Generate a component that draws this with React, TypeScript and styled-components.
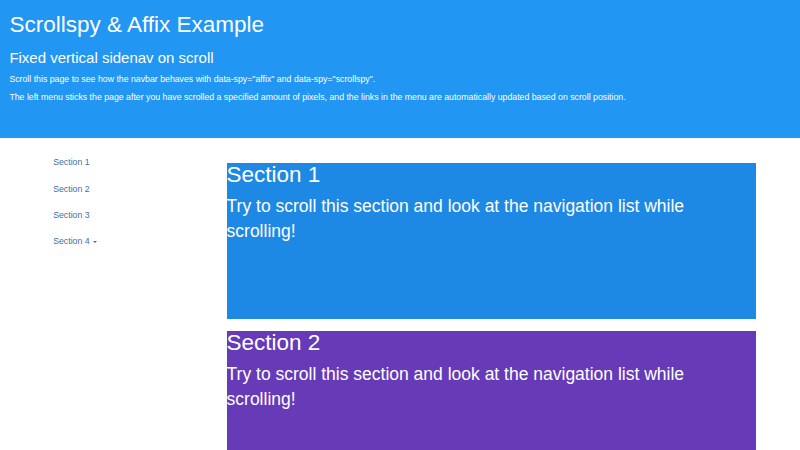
import styled, { createGlobalStyle } from 'styled-components';

const GlobalStyle = createGlobalStyle`
  html, body {
    margin: 0;
    padding: 0;
    overflow: hidden;
    background: #fff;
  }

  body {
    font-family: 'Liberation Sans', Arial, sans-serif;
    font-size: 8.75px;
    line-height: 12.5px;
    color: #333;
  }

  * {
    box-sizing: border-box;
  }
`;

const sections = [
  { id: 'section1', title: 'Section 1', color: '#1E88E5' },
  { id: 'section2', title: 'Section 2', color: '#673ab7' },
];

const navItems = ['Section 1', 'Section 2', 'Section 3'];

function App() {
  return (
    <>
      <GlobalStyle />
      <Header>
        <Title>Scrollspy &amp; Affix Example</Title>
        <SubTitle>Fixed vertical sidenav on scroll</SubTitle>
        <Lead>
          Scroll this page to see how the navbar behaves with data-spy="affix"
          and data-spy="scrollspy".
        </Lead>
        <Lead>
          The left menu sticks the page after you have scrolled a specified
          amount of pixels, and the links in the menu are automatically updated
          based on scroll position.
        </Lead>
      </Header>
      <Spacer />
      <Container>
        <SideNav>
          <NavList>
            {navItems.map((item) => (
              <NavItem key={item}>
                <NavLink href="#">{item}</NavLink>
              </NavItem>
            ))}
            <NavItem>
              <NavLink href="#">
                Section 4 <Caret />
              </NavLink>
            </NavItem>
          </NavList>
        </SideNav>
        <Main>
          {sections.map((section) => (
            <Section key={section.id} $bg={section.color}>
              <SectionTitle>{section.title}</SectionTitle>
              <SectionText>
                Try to scroll this section and look at the navigation list while
                scrolling!
              </SectionText>
            </Section>
          ))}
        </Main>
      </Container>
    </>
  );
}

export default App;

const Header = styled.div`
  height: 137.5px;
  padding: 0 9.375px;
  background-color: #2196f3;
  color: #fff;
  overflow: hidden;
`;

const Title = styled.h1`
  margin: 12.5px 0 6.25px;
  font-size: 22.5px;
  font-weight: 500;
  line-height: 1.1;
`;

const SubTitle = styled.h3`
  margin: 12.5px 0 6.25px;
  font-size: 15px;
  font-weight: 500;
  line-height: 1.1;
`;

const Lead = styled.p`
  margin: 0 0 6.25px;
`;

const Spacer = styled.div`
  height: 12.5px;
`;

const Container = styled.div`
  width: 731.25px;
  margin: 0 auto;
  display: flex;
`;

const SideNav = styled.nav`
  width: 25%;
  padding: 0 9.375px;
`;

const NavList = styled.ul`
  list-style: none;
  margin: 0;
  padding: 0;
  display: flex;
  flex-direction: column;
  gap: 1.25px;
`;

const NavItem = styled.li`
  display: block;
`;

const NavLink = styled.a`
  display: block;
  padding: 6.25px 9.375px;
  color: #3f6f9f;
  text-decoration: none;
  border-radius: 2.5px;
`;

const Caret = styled.span`
  display: inline-block;
  width: 0;
  height: 0;
  margin-left: 1.25px;
  vertical-align: middle;
  border-top: 2.5px solid #3f6f9f;
  border-right: 2.5px solid transparent;
  border-left: 2.5px solid transparent;
`;

const Main = styled.div`
  width: 75%;
  padding: 0 9.375px;
`;

const Section = styled.div<{ $bg: string }>`
  height: 156.25px;
  font-size: 17.5px;
  line-height: 25px;
  color: #fff;
  background-color: ${(p) => p.$bg};
`;

const SectionTitle = styled.h1`
  margin: 12.5px 0 6.25px;
  font-size: 22.5px;
  font-weight: 500;
  line-height: 1.1;
`;

const SectionText = styled.p`
  margin: 0 0 6.25px;
`;
